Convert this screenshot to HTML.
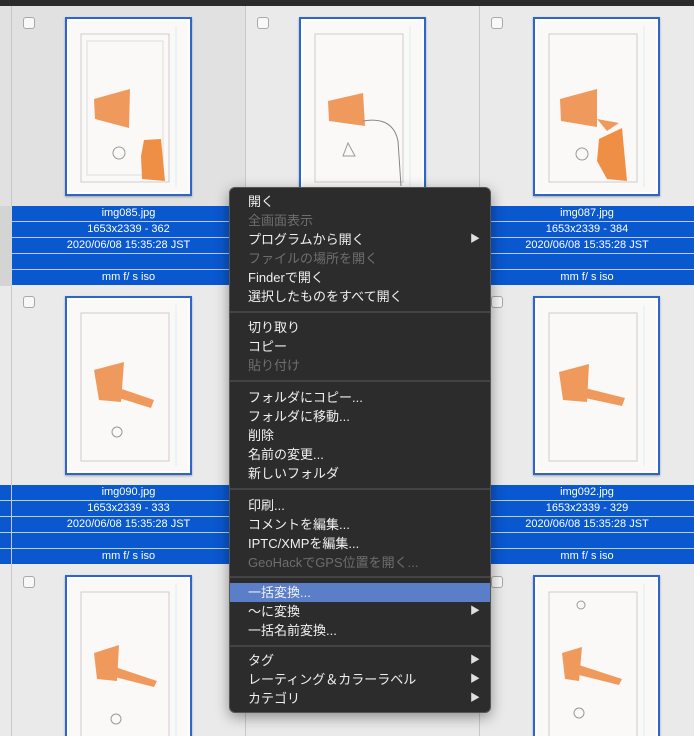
<!DOCTYPE html>
<html><head><meta charset="utf-8"><style>
*{margin:0;padding:0;box-sizing:border-box}
html,body{width:694px;height:736px;overflow:hidden}
body{background:#eaeaea;position:relative;font-family:"Liberation Sans","Noto Sans CJK JP",sans-serif}
.a{position:absolute}
.top{left:0;top:0;width:694px;height:6px;background:#2b2b2b}
.vl{top:6px;width:1px;height:730px;background:#c8c8c8}
.cb{width:12px;height:12px;border:1px solid #a8a8a8;border-radius:3px;background:#f8f8f8}
.th{width:127px;height:179px;border:2px solid #2d66c8;background:#fff;padding:2px;box-shadow:0 1px 2px rgba(0,0,0,.3)}
.th svg{display:block;width:119px;height:171px}
.lb{height:15px;background:#0a58d0;color:#fff;font-size:11px;line-height:15px;text-align:center}
.menu{left:229px;top:187px;width:262px;height:526px;background:#2c2c2c;border-radius:6px;border:1px solid #555;box-shadow:0 4px 14px rgba(0,0,0,.4)}
.mi{position:absolute;left:18px;font-size:13px;color:#f0f0f0;line-height:19px;height:19px}
.dis{color:#6e6e6e}
.sep{position:absolute;left:0;width:260px;height:2px;background:#444}
.hl{position:absolute;left:0;top:395px;width:260px;height:19px;background:#5a7fc8}
.arr{position:absolute;left:240px;font-size:10px;color:#e0e0e0;line-height:19px}
</style></head><body>
<div class="a top"></div>
<div class="a" style="left:0;top:6px;width:245px;height:200px;background:#e1e1e1"></div>
<div class="a vl" style="left:11px"></div>
<div class="a vl" style="left:245px"></div>
<div class="a vl" style="left:479px"></div>

<div class="a" style="left:0;top:206px;width:12px;height:80px;background:#d4d4d4"></div>
<div class="a" style="left:12px;top:206px;width:682px;height:79px;background:#0a58d0"></div>
<div class="a" style="left:0;top:485px;width:694px;height:79px;background:#0a58d0"></div>

<div class="a cb" style="left:23px;top:17px"></div>
<div class="a cb" style="left:257px;top:17px"></div>
<div class="a cb" style="left:491px;top:17px"></div>

<div class="a th" style="left:65px;top:17px"><svg viewBox="0 0 119 171"><rect width="119" height="171" fill="#fbf9f8"/><rect x="12" y="13" width="88" height="148" fill="none" stroke="#ccc"/><rect x="18" y="20" width="76" height="134" fill="none" stroke="#ddd"/><line x1="107" y1="5" x2="107" y2="166" stroke="#d8eef0"/><polygon points="25,78 61,68 60,107 26,98" fill="#ef9a5c"/><polygon points="75,119 92,118 96,160 73,158 72,135" fill="#ef8f45"/><circle cx="50" cy="132" r="6" fill="none" stroke="#999"/></svg></div>
<div class="a th" style="left:299px;top:17px"><svg viewBox="0 0 119 171"><rect width="119" height="171" fill="#fbf9f8"/><rect x="12" y="13" width="88" height="148" fill="none" stroke="#ccc"/><line x1="107" y1="5" x2="107" y2="166" stroke="#d8eef0"/><polygon points="25,80 60,72 62,105 26,100" fill="#ef9a5c"/><path d="M60 100 Q90 95 95 120 L98 165" fill="none" stroke="#888"/><polygon points="45,122 52,135 40,135" fill="none" stroke="#999"/></svg></div>
<div class="a th" style="left:533px;top:17px"><svg viewBox="0 0 119 171"><rect width="119" height="171" fill="#fbf9f8"/><rect x="12" y="13" width="88" height="148" fill="none" stroke="#ccc"/><line x1="107" y1="5" x2="107" y2="166" stroke="#d8eef0"/><polygon points="23,78 60,68 60,106 24,100" fill="#ef9a5c"/><polygon points="60,98 82,102 70,110" fill="#ef9a5c"/><polygon points="62,118 85,107 90,160 70,158 60,140" fill="#ef8f45"/><circle cx="45" cy="133" r="6" fill="none" stroke="#999"/></svg></div>

<div class="a" style="left:12px;top:206px;width:233px">
<div class="lb" style="margin-bottom:1px">img085.jpg</div><div class="lb" style="margin-bottom:1px">1653x2339 - 362</div><div class="lb" style="margin-bottom:1px">2020/06/08 15:35:28 JST</div><div class="lb" style="margin-bottom:1px"></div><div class="lb">mm f/ s iso</div>
</div>
<div class="a" style="left:480px;top:206px;width:214px">
<div class="lb" style="margin-bottom:1px">img087.jpg</div><div class="lb" style="margin-bottom:1px">1653x2339 - 384</div><div class="lb" style="margin-bottom:1px">2020/06/08 15:35:28 JST</div><div class="lb" style="margin-bottom:1px"></div><div class="lb">mm f/ s iso</div>
</div>
<div class="a" style="left:12px;top:221px;width:682px;height:1px;background:#b9cdf0"></div>
<div class="a" style="left:12px;top:237px;width:682px;height:1px;background:#b9cdf0"></div>
<div class="a" style="left:12px;top:253px;width:682px;height:1px;background:#b9cdf0"></div>
<div class="a" style="left:12px;top:269px;width:682px;height:1px;background:#b9cdf0"></div>

<div class="a cb" style="left:23px;top:296px"></div>
<div class="a cb" style="left:257px;top:296px"></div>
<div class="a cb" style="left:491px;top:296px"></div>
<div class="a th" style="left:65px;top:296px"><svg viewBox="0 0 119 171"><rect width="119" height="171" fill="#fbf9f8"/><rect x="12" y="13" width="88" height="148" fill="none" stroke="#ccc"/><line x1="107" y1="5" x2="107" y2="166" stroke="#d8eef0"/><polygon points="25,70 55,62 52,102 30,100" fill="#ef9a5c"/><polygon points="50,88 85,100 82,108 50,98" fill="#ef9a5c"/><circle cx="48" cy="132" r="5" fill="none" stroke="#999"/></svg></div>
<div class="a th" style="left:299px;top:296px"><svg viewBox="0 0 119 171"><rect width="119" height="171" fill="#fbf9f8"/><rect x="12" y="13" width="88" height="148" fill="none" stroke="#ccc"/><polygon points="25,70 55,62 52,102 30,100" fill="#ef9a5c"/></svg></div>
<div class="a th" style="left:533px;top:296px"><svg viewBox="0 0 119 171"><rect width="119" height="171" fill="#fbf9f8"/><rect x="12" y="13" width="88" height="148" fill="none" stroke="#ccc"/><line x1="107" y1="5" x2="107" y2="166" stroke="#d8eef0"/><polygon points="22,72 52,64 50,102 26,100" fill="#ef9a5c"/><polygon points="48,88 88,98 85,106 48,98" fill="#ef9a5c"/></svg></div>

<div class="a" style="left:12px;top:485px;width:233px">
<div class="lb" style="margin-bottom:1px">img090.jpg</div><div class="lb" style="margin-bottom:1px">1653x2339 - 333</div><div class="lb" style="margin-bottom:1px">2020/06/08 15:35:28 JST</div><div class="lb" style="margin-bottom:1px"></div><div class="lb">mm f/ s iso</div>
</div>
<div class="a" style="left:480px;top:485px;width:214px">
<div class="lb" style="margin-bottom:1px">img092.jpg</div><div class="lb" style="margin-bottom:1px">1653x2339 - 329</div><div class="lb" style="margin-bottom:1px">2020/06/08 15:35:28 JST</div><div class="lb" style="margin-bottom:1px"></div><div class="lb">mm f/ s iso</div>
</div>
<div class="a" style="left:0;top:500px;width:694px;height:1px;background:#b9cdf0"></div>
<div class="a" style="left:0;top:516px;width:694px;height:1px;background:#b9cdf0"></div>
<div class="a" style="left:0;top:532px;width:694px;height:1px;background:#b9cdf0"></div>
<div class="a" style="left:0;top:548px;width:694px;height:1px;background:#b9cdf0"></div>
<div class="a" style="left:11px;top:485px;width:1px;height:79px;background:#c8c8c8"></div>

<div class="a cb" style="left:23px;top:576px"></div>
<div class="a cb" style="left:491px;top:576px"></div>
<div class="a th" style="left:65px;top:575px"><svg viewBox="0 0 119 171"><rect width="119" height="171" fill="#fbf9f8"/><rect x="12" y="13" width="88" height="148" fill="none" stroke="#ccc"/><line x1="107" y1="5" x2="107" y2="166" stroke="#d8eef0"/><polygon points="25,74 50,66 48,102 28,100" fill="#ef9a5c"/><polygon points="46,88 88,102 85,108 46,98" fill="#ef9a5c"/><circle cx="47" cy="140" r="5" fill="none" stroke="#999"/></svg></div>
<div class="a th" style="left:533px;top:575px"><svg viewBox="0 0 119 171"><rect width="119" height="171" fill="#fbf9f8"/><rect x="12" y="13" width="88" height="148" fill="none" stroke="#ccc"/><line x1="107" y1="5" x2="107" y2="166" stroke="#d8eef0"/><polygon points="25,74 45,68 42,102 28,100" fill="#ef9a5c"/><polygon points="42,86 85,100 82,106 42,96" fill="#ef9a5c"/><circle cx="44" cy="26" r="4" fill="none" stroke="#999"/><circle cx="42" cy="134" r="5" fill="none" stroke="#999"/></svg></div>

<div class="a menu">
<div class="hl"></div>
<div class="mi" style="top:4px">開く</div>
<div class="mi dis" style="top:23px">全画面表示</div>
<div class="mi" style="top:42px">プログラムから開く</div><div class="arr" style="top:42px">▶</div>
<div class="mi dis" style="top:61px">ファイルの場所を開く</div>
<div class="mi" style="top:80px">Finderで開く</div>
<div class="mi" style="top:99px">選択したものをすべて開く</div>
<div class="sep" style="top:123px"></div>
<div class="mi" style="top:130px">切り取り</div>
<div class="mi" style="top:149px">コピー</div>
<div class="mi dis" style="top:168px">貼り付け</div>
<div class="sep" style="top:192px"></div>
<div class="mi" style="top:200px">フォルダにコピー...</div>
<div class="mi" style="top:219px">フォルダに移動...</div>
<div class="mi" style="top:238px">削除</div>
<div class="mi" style="top:257px">名前の変更...</div>
<div class="mi" style="top:276px">新しいフォルダ</div>
<div class="sep" style="top:300px"></div>
<div class="mi" style="top:308px">印刷...</div>
<div class="mi" style="top:327px">コメントを編集...</div>
<div class="mi" style="top:346px">IPTC/XMPを編集...</div>
<div class="mi dis" style="top:365px">GeoHackでGPS位置を開く...</div>
<div class="sep" style="top:388px"></div>
<div class="mi" style="top:395px">一括変換...</div>
<div class="mi" style="top:414px">〜に変換</div><div class="arr" style="top:414px">▶</div>
<div class="mi" style="top:433px">一括名前変換...</div>
<div class="sep" style="top:457px"></div>
<div class="mi" style="top:463px">タグ</div><div class="arr" style="top:463px">▶</div>
<div class="mi" style="top:482px">レーティング＆カラーラベル</div><div class="arr" style="top:482px">▶</div>
<div class="mi" style="top:501px">カテゴリ</div><div class="arr" style="top:501px">▶</div>
</div>
</body></html>
